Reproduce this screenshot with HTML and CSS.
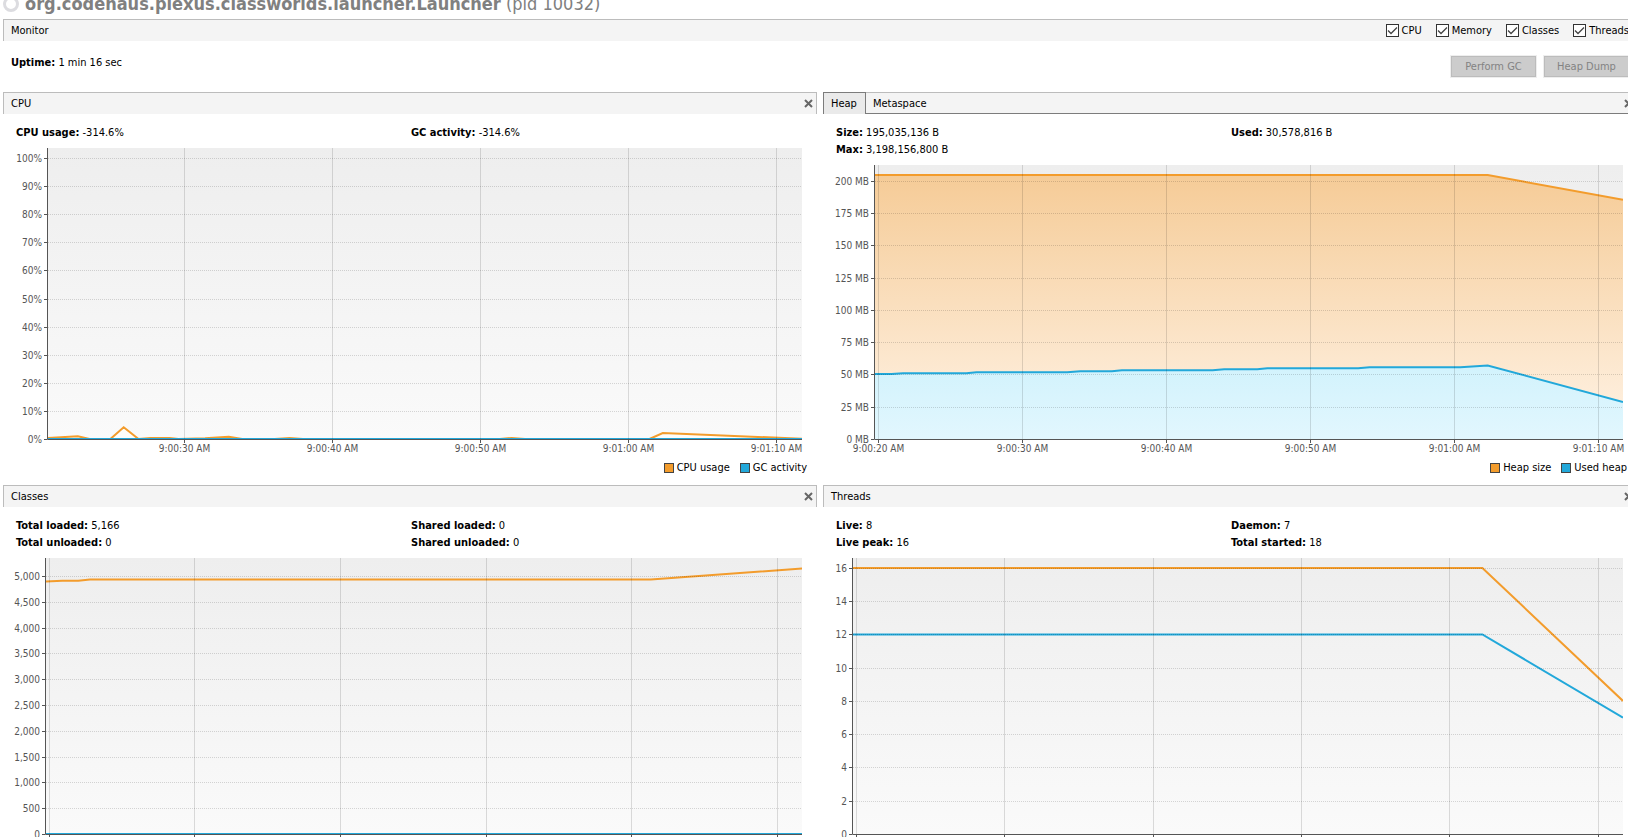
FILE: index.html
```html
<!DOCTYPE html>
<html lang="en">
<head>
  <meta charset="UTF-8">
  <meta name="viewport" content="width=device-width, initial-scale=1.0">
  <title>Monitor</title>
  <link rel="stylesheet" href="styles.css">
</head>
<body>
  <div class="monitor">
    <h1 class="title">
      <span class="spinner"></span>
      <span><b>org.codehaus.plexus.classworlds.launcher.Launcher</b> (pid 10032)</span>
    </h1>

    <div class="bar">
      <span class="bar-name">Monitor</span>
      <div class="checks">
        <label><input type="checkbox" checked>CPU</label>
        <label><input type="checkbox" checked>Memory</label>
        <label><input type="checkbox" checked>Classes</label>
        <label><input type="checkbox" checked>Threads</label>
      </div>
    </div>

    <div class="overview">
      <div><b>Uptime:</b> 1 min 16 sec</div>
      <div class="actions">
        <button class="action" disabled>Perform GC</button>
        <button class="action" disabled>Heap Dump</button>
      </div>
    </div>

    <div class="panels">
      <section class="panel">
        <div class="bar">
          <span class="bar-name">CPU</span>
          <button class="close" aria-label="Close"><svg width="9" height="9" viewBox="0 0 9 9"><path d="M1 1L8 8M8 1L1 8"/></svg></button>
        </div>
        <div class="details">
          <div><b>CPU usage:</b> -314.6%</div>
          <div><b>GC activity:</b> -314.6%</div>
        </div>
        <svg class="chart" id="cpuChart"></svg>
        <div class="legend">
          <span><i class="swatch orange"></i>CPU usage</span>
          <span><i class="swatch blue"></i>GC activity</span>
        </div>
      </section>

      <section class="panel">
        <div class="bar tabs">
          <button class="tab active">Heap</button>
          <button class="tab">Metaspace</button>
          <button class="close" aria-label="Close"><svg width="9" height="9" viewBox="0 0 9 9"><path d="M1 1L8 8M8 1L1 8"/></svg></button>
        </div>
        <div class="details">
          <div><b>Size:</b> 195,035,136 B</div>
          <div><b>Used:</b> 30,578,816 B</div>
          <div><b>Max:</b> 3,198,156,800 B</div>
        </div>
        <svg class="chart" id="heapChart"></svg>
        <div class="legend">
          <span><i class="swatch orange"></i>Heap size</span>
          <span><i class="swatch blue"></i>Used heap</span>
        </div>
      </section>

      <section class="panel">
        <div class="bar">
          <span class="bar-name">Classes</span>
          <button class="close" aria-label="Close"><svg width="9" height="9" viewBox="0 0 9 9"><path d="M1 1L8 8M8 1L1 8"/></svg></button>
        </div>
        <div class="details">
          <div><b>Total loaded:</b> 5,166</div>
          <div><b>Shared loaded:</b> 0</div>
          <div><b>Total unloaded:</b> 0</div>
          <div><b>Shared unloaded:</b> 0</div>
        </div>
        <svg class="chart counts" id="classesChart"></svg>
      </section>

      <section class="panel">
        <div class="bar">
          <span class="bar-name">Threads</span>
          <button class="close" aria-label="Close"><svg width="9" height="9" viewBox="0 0 9 9"><path d="M1 1L8 8M8 1L1 8"/></svg></button>
        </div>
        <div class="details">
          <div><b>Live:</b> 8</div>
          <div><b>Daemon:</b> 7</div>
          <div><b>Live peak:</b> 16</div>
          <div><b>Total started:</b> 18</div>
        </div>
        <svg class="chart counts" id="threadsChart"></svg>
      </section>
    </div>
  </div>

  <script>
    // x values are seconds after 9:00:00
    const charts = [
      {
        id: 'cpuChart', axis: 44, margin: 15, start: 20.79, end: 71.7, max: 103.56, step: 10, last: 100,
        format: v => v + '%',
        series: [
          { color: 'orange', fill: 'pale', points: [[20.79, 0.4], [22.8, 1], [23.6, 0], [25, 0], [25.9, 4.2], [26.9, 0], [27.7, 0.4], [29, 0.4], [29.6, 0], [31.4, 0.3], [33, 0.8], [33.9, 0], [36.1, 0], [37.1, 0.4], [38, 0], [51.3, 0], [52.1, 0.4], [53, 0], [61.4, 0], [62.3, 2.1], [71.7, 0.1]] },
          { color: 'blue', points: [[20.79, 0], [71.7, 0]] }
        ]
      },
      {
        id: 'heapChart', axis: 51, margin: 14, start: 19.75, end: 71.7, max: 212.4, step: 25, last: 200,
        format: v => v + ' MB',
        series: [
          { color: 'orange', fill: 'orange', points: [[19.75, 204.6], [62.3, 204.6], [71.7, 185.5]] },
          { color: 'blue', fill: 'blue', points: [[19.75, 50.3], [20.9, 50.3], [21.7, 51], [26.1, 51], [26.8, 51.8], [33.1, 51.8], [34, 52.5], [36.2, 52.5], [36.9, 53.3], [43.2, 53.3], [44, 54], [46.3, 54], [47, 54.8], [53.3, 54.8], [54.1, 55.6], [60.4, 55.6], [62.3, 57], [71.7, 28.7]] }
        ]
      },
      {
        id: 'classesChart', axis: 42, margin: 15, start: 19.78, end: 71.68, max: 5349, step: 500, last: 5000,
        format: v => v.toLocaleString('en-US'),
        series: [
          { color: 'orange', points: [[19.78, 4893], [20.9, 4910], [22, 4910], [22.8, 4935], [61.3, 4935], [71.68, 5146]] },
          { color: 'blue', points: [[19.78, 0], [71.68, 0]] }
        ]
      },
      {
        id: 'threadsChart', axis: 29, margin: 14, start: 19.76, end: 71.68, max: 16.6, step: 2, last: 16,
        format: v => v,
        series: [
          { color: 'orange', points: [[19.76, 16], [62.2, 16], [71.68, 8]] },
          { color: 'blue', points: [[19.76, 12], [62.2, 12], [71.68, 7]] }
        ]
      }
    ];

    function drawChart(chart) {
      const svg = document.getElementById(chart.id);
      const left = chart.axis;
      const right = svg.clientWidth - chart.margin;
      const bottom = svg.clientHeight - 20;
      const px = t => left + 1 + (t - chart.start) / (chart.end - chart.start) * (right - left - 1);
      const py = v => bottom - v / chart.max * bottom;

      let out = `<defs>
        <linearGradient id="${chart.id}Back" x2="0" y2="1"><stop class="back-top"/><stop class="back-bottom" offset="1"/></linearGradient>
        <linearGradient id="${chart.id}Fill0" gradientUnits="userSpaceOnUse" x1="0" x2="0" y1="0" y2="${bottom}"><stop class="orange-top"/><stop class="orange-bottom" offset="1"/></linearGradient>
        <linearGradient id="${chart.id}Fill1" gradientUnits="userSpaceOnUse" x1="0" x2="0" y1="0" y2="${bottom}"><stop class="blue-top"/><stop class="blue-bottom" offset="1"/></linearGradient>
        <clipPath id="${chart.id}Clip"><rect x="${left}" y="0" width="${right - left}" height="${bottom + 1}"/></clipPath>
      </defs>
      <rect x="${left}" y="0" width="${right - left}" height="${bottom}" fill="url(#${chart.id}Back)"/>
      <g clip-path="url(#${chart.id}Clip)">`;

      // Areas and lines
      chart.series.forEach((s, i) => {
        const line = s.points.map(p => `${px(p[0]).toFixed(1)},${py(p[1]).toFixed(1)}`).join(' ');
        if (s.fill) {
          const fill = s.fill === 'pale' ? '#fffdfa' : `url(#${chart.id}Fill${i})`;
          out += `<polygon points="${left},${bottom} ${line} ${right},${bottom}" fill="${fill}"/>`;
        }
        out += `<polyline class="line ${s.color}" points="${line}"/>`;
      });
      out += '</g>';

      // Horizontal grid, ticks and value labels
      for (let v = 0; v <= chart.last; v += chart.step) {
        const y = Math.round(py(v)) + 0.5;
        if (v > 0) {
          out += `<line class="grid dotted" x1="${left + 1}" y1="${y}" x2="${right}" y2="${y}"/>`;
        }
        out += `<line class="axis" x1="${left - 3}" y1="${y}" x2="${left}" y2="${y}"/>`;
        out += `<text class="tick-text" x="${left - 5}" y="${y + 3.5}" text-anchor="end">${chart.format(v)}</text>`;
      }

      // Vertical grid and time labels
      for (let t = 20; t <= 70; t += 10) {
        if (t < chart.start) continue;
        const x = Math.floor(px(t)) + 0.5;
        const label = t < 60 ? `9:00:${t} AM` : `9:01:${t - 60 || '00'} AM`;
        out += `<line class="grid" x1="${x}" y1="0" x2="${x}" y2="${bottom}"/>`;
        out += `<line class="axis" x1="${x}" y1="${bottom + 1}" x2="${x}" y2="${bottom + 4}"/>`;
        out += `<text class="tick-text" x="${x}" y="${bottom + 13}" text-anchor="middle">${label}</text>`;
      }

      out += `<path class="axis" d="M${left + 0.5} 0V${bottom + 0.5}H${right}"/>`;
      svg.innerHTML = out;
    }

    function drawAll() {
      charts.forEach(drawChart);
    }

    drawAll();
    window.addEventListener('resize', drawAll);
  </script>
</body>
</html>
```
FILE: styles.css
```css
body {
  margin: 0;
  height: 100vh;
  overflow: hidden;
  background-color: #fff;
  color: #000;
  font-family: Tahoma, "DejaVu Sans Condensed", "DejaVu Sans", sans-serif;
  font-size: 11px;
  line-height: 17px;
}
button {
  font: inherit;
  color: inherit;
}
/* the window is a little wider than the view, so the right side is cut */
.monitor {
  margin: -11px -9px 0 3px;
}
.title {
  display: flex;
  align-items: center;
  gap: 6px;
  height: 30px;
  margin: 0;
  color: #808080;
  font-size: 18px;
  font-weight: normal;
  line-height: 30px;
  white-space: nowrap;
}
.spinner {
  box-sizing: border-box;
  width: 16px;
  height: 16px;
  border: 3px solid #dcdce0;
  border-radius: 50%;
}
.bar {
  display: flex;
  align-items: center;
  justify-content: space-between;
  box-sizing: border-box;
  height: 22px;
  padding: 0 3px 0 7px;
  border: 1px solid #bcbcbc;
  border-bottom: none;
  background-color: #f4f4f4;
}
.checks {
  display: flex;
  gap: 14px;
  padding-right: 4px;
}
.checks label {
  display: flex;
  align-items: center;
  gap: 3px;
}
.checks input {
  appearance: none;
  box-sizing: border-box;
  width: 13px;
  height: 13px;
  margin: 0;
  border: 1px solid #333;
  background: #fff url("data:image/svg+xml,%3Csvg xmlns='http://www.w3.org/2000/svg' viewBox='0 0 11 11'%3E%3Cpath d='M1 5.5L4 8.5L10 2.5' fill='none' stroke='%23444' stroke-width='1.3'/%3E%3C/svg%3E");
}
.overview {
  display: flex;
  justify-content: space-between;
  height: 51px;
  box-sizing: border-box;
  padding: 13px 8px 0;
}
.actions {
  display: flex;
  align-items: flex-end;
  gap: 8px;
  height: 23px;
}
.action {
  width: 85px;
  height: 21px;
  padding: 0;
  border: 1px solid #bcbcbc;
  outline: 1px solid #eee;
  background-color: #ccc;
  color: #838383;
}
.panels {
  display: grid;
  grid-template-columns: 1fr 1fr;
  column-gap: 6px;
}
.panel {
  display: flex;
  flex-direction: column;
  min-width: 0;
}
.close {
  display: flex;
  padding: 0;
  border: none;
  background: none;
}
.close path {
  stroke: #666;
  stroke-width: 2;
}
.tabs {
  justify-content: flex-start;
  padding-left: 0;
  border-left: none;
  border-bottom: 1px solid #7c7c7c;
}
.tabs .close {
  margin-left: auto;
}
.tab {
  height: 22px;
  padding: 0 7px;
  border: none;
  background: none;
}
.tab.active {
  padding: 0 8px 0 7px;
  border: 1px solid #7c7c7c;
  border-bottom: none;
  background-color: #eaeaea;
}
.details {
  display: grid;
  grid-template-columns: 1fr 1fr;
  padding: 10px 11px 7px 13px;
}
.chart {
  display: block;
  flex: 1;
  width: 100%;
  min-height: 294px;
}
.chart.counts {
  min-height: 296px;
}
.legend {
  display: flex;
  justify-content: flex-end;
  gap: 10px;
  padding: 0 10px 9px;
}
.legend span {
  display: flex;
  align-items: center;
  gap: 3px;
}
.swatch {
  width: 8px;
  height: 8px;
  border: 1px solid #444;
}
.swatch.orange {
  background-color: #f39c2c;
}
.swatch.blue {
  background-color: #22a8da;
}
.line {
  fill: none;
  stroke-width: 2;
}
.line.orange {
  stroke: #f39c2c;
}
.line.blue {
  stroke: #22a8da;
}
.grid {
  stroke: rgba(0, 0, 0, 0.13);
}
.dotted {
  stroke-dasharray: 1 1;
  stroke: rgba(0, 0, 0, 0.15);
}
.axis {
  fill: none;
  stroke: #555;
}
.tick-text {
  fill: #555;
  font-size: 10px;
}
.back-top {
  stop-color: #eee;
}
.back-bottom {
  stop-color: #fafafa;
}
.orange-top {
  stop-color: #f5ca94;
}
.orange-bottom {
  stop-color: #fff3e6;
}
.blue-top {
  stop-color: #a5e6f7;
}
.blue-bottom {
  stop-color: #e2f7fe;
}
```
